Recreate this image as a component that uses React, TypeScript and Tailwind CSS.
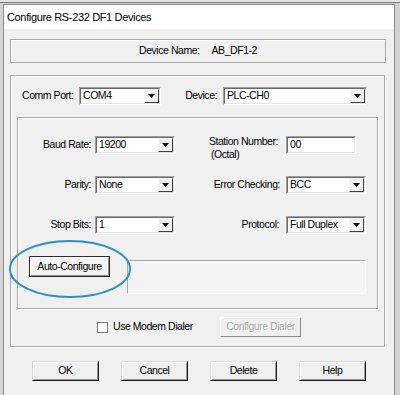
import React from "react";

const ui = "font-['Liberation_Sans',Arial,sans-serif] text-[10.5px] tracking-[-0.45px] text-black";

function Arrow() {
  return (
    <div className="w-[15px] h-full bg-[#f0f0f0] border border-t-[#f8f8f8] border-l-[#f8f8f8] border-b-[#404040] border-r-[#404040] flex items-center justify-center">
      <svg width="7" height="4" viewBox="0 0 7 4">
        <path d="M0 0h7L3.5 4z" fill="#000" />
      </svg>
    </div>
  );
}

function Combo({ value, width }: { value: string; width: string }) {
  return (
    <div className={`${width} h-[18px] flex border border-t-[#a0a0a0] border-l-[#a0a0a0] border-b-white border-r-white`}>
      <div className="flex-1 min-w-0 flex bg-white border border-t-[#696969] border-l-[#696969] border-b-[#e3e3e3] border-r-[#e3e3e3]">
        <div className="flex-1 pl-[2px] flex items-center">{value}</div>
        <Arrow />
      </div>
    </div>
  );
}

function TextBox({ value, width }: { value: string; width: string }) {
  return (
    <div className={`${width} h-[18px] flex border border-t-[#a0a0a0] border-l-[#a0a0a0] border-b-white border-r-white`}>
      <div className="flex-1 flex items-center pl-[2px] bg-white border border-t-[#696969] border-l-[#696969] border-b-[#e3e3e3] border-r-[#e3e3e3]">
        {value}
      </div>
    </div>
  );
}

function Btn({ label, width, disabled }: { label: string; width: string; disabled?: boolean }) {
  if (disabled) {
    return (
      <div className={`${width} h-[20px] flex border border-t-white border-l-white border-b-[#8a8a8a] border-r-[#8a8a8a]`}>
        <div className="flex-1 flex items-center justify-center text-[#a8a8a8] [text-shadow:1px_1px_0_#fff]">{label}</div>
      </div>
    );
  }
  return (
    <div className={`${width} h-[20px] flex border border-t-[#dcdcdc] border-l-[#dcdcdc] border-b-[#1a1a1a] border-r-[#1a1a1a]`}>
      <div className="flex-1 flex items-center justify-center border border-t-white border-l-white border-b-[#9a9a9a] border-r-[#9a9a9a]">
        {label}
      </div>
    </div>
  );
}

function Label({ text, width }: { text: string; width: string }) {
  return <div className={`${width} text-right shrink-0`}>{text}</div>;
}

export default function App() {
  return (
    <div className={`relative w-[400px] h-[395px] overflow-hidden bg-[#d2d2d2] ${ui}`}>
      <div className="h-[3px] bg-[#e4e4e4] border-b border-[#7a7a7a]" />
      <div className="ml-[3px] mt-[1px] w-[392px] h-[400px] flex flex-col border border-[#8a8a8a] bg-[#f0f0f0]">
        {/* title bar */}
        <div className="h-[24px] bg-white flex items-center pl-[3px] text-[11px] tracking-[-0.35px]">
          Configure RS-232 DF1 Devices
        </div>

        <div className="flex flex-col pt-[10px]">
          {/* device name */}
          <div className="ml-[6px] w-[376px] h-[24px] flex items-center justify-center gap-[12px] border border-t-[#a8a8a8] border-l-[#a8a8a8] border-b-[#a8a8a8] border-r-[#a8a8a8] shadow-[inset_1px_1px_0_#fff]">
            <span>Device Name:</span>
            <span>AB_DF1-2</span>
          </div>

          {/* outer group */}
          <div className="mt-[12px] ml-[6px] w-[375px] h-[272px] flex flex-col border border-[#a8a8a8] shadow-[inset_1px_1px_0_#fff,1px_1px_0_#fff]">
            <div className="mt-[11px] h-[18px] flex items-center pl-[11px]">
              <div className="w-[52px] shrink-0">Comm Port:</div>
              <div className="ml-[5px]">
                <Combo value="COM4" width="w-[82px]" />
              </div>
              <Label text="Device:" width="w-[56px]" />
              <div className="ml-[6px]">
                <Combo value="PLC-CH0" width="w-[144px]" />
              </div>
            </div>

            {/* inner group */}
            <div className="mt-[12px] ml-[6px] w-[361px] h-[192px] flex flex-col border border-[#a8a8a8] shadow-[inset_1px_1px_0_#fff,1px_1px_0_#fff]">
              <div className="mt-[18px] h-[18px] flex items-start">
                <Label text="Baud Rate:" width="w-[73px] self-center" />
                <div className="ml-[4px]">
                  <Combo value="19200" width="w-[80px]" />
                </div>
                <div className="w-[103px] shrink-0 flex justify-end">
                  <div className="flex flex-col leading-[13px] -mt-[1px]">
                    <span>Station Number:</span>
                    <span className="pl-[2px]">(Octal)</span>
                  </div>
                </div>
                <div className="ml-[8px]">
                  <TextBox value="00" width="w-[70px]" />
                </div>
              </div>

              <div className="mt-[22px] h-[18px] flex items-center">
                <Label text="Parity:" width="w-[73px]" />
                <div className="ml-[4px]">
                  <Combo value="None" width="w-[80px]" />
                </div>
                <Label text="Error Checking:" width="w-[105px]" />
                <div className="ml-[6px]">
                  <Combo value="BCC" width="w-[80px]" />
                </div>
              </div>

              <div className="mt-[22px] h-[18px] flex items-center">
                <Label text="Stop Bits:" width="w-[73px]" />
                <div className="ml-[4px]">
                  <Combo value="1" width="w-[80px]" />
                </div>
                <Label text="Protocol:" width="w-[104px]" />
                <div className="ml-[7px]">
                  <Combo value="Full Duplex" width="w-[80px]" />
                </div>
              </div>

              <div className="mt-[22px] flex items-start">
                <div className="ml-[11px] w-[81px] h-[21px] flex border border-[#2a2a2a]">
                  <div className="flex-1 flex items-center justify-center bg-[#f4f4f4] border border-t-white border-l-white border-b-[#8e8e8e] border-r-[#8e8e8e]">
                    Auto-Configure
                  </div>
                </div>
                <div className="mt-[4px] ml-[17px] w-[239px] h-[34px] bg-[#f3f3f3] border border-t-[#a8a8a8] border-l-[#a8a8a8] border-b-[#fafafa] border-r-[#fafafa]" />
              </div>
            </div>

            {/* modem row */}
            <div className="mt-[8px] h-[20px] flex items-center pl-[86px]">
              <div className="w-[11px] h-[11px] bg-white border border-[#7a7a7a] shrink-0" />
              <div className="ml-[5px] w-[107px] shrink-0">Use Modem Dialer</div>
              <Btn label="Configure Dialer" width="w-[81px]" disabled />
            </div>
          </div>

          {/* bottom buttons */}
          <div className="mt-[14px] ml-[28px] flex gap-[22px]">
            <Btn label="OK" width="w-[67px]" />
            <Btn label="Cancel" width="w-[67px]" />
            <Btn label="Delete" width="w-[67px]" />
            <Btn label="Help" width="w-[67px]" />
          </div>
        </div>
      </div>

      {/* annotation ellipse */}
      <svg className="absolute left-[8px] top-[239px]" width="126" height="62" viewBox="0 0 126 62">
        <ellipse cx="62" cy="30" rx="60" ry="28" fill="none" stroke="#2b8fc4" strokeWidth="2" />
      </svg>
    </div>
  );
}
